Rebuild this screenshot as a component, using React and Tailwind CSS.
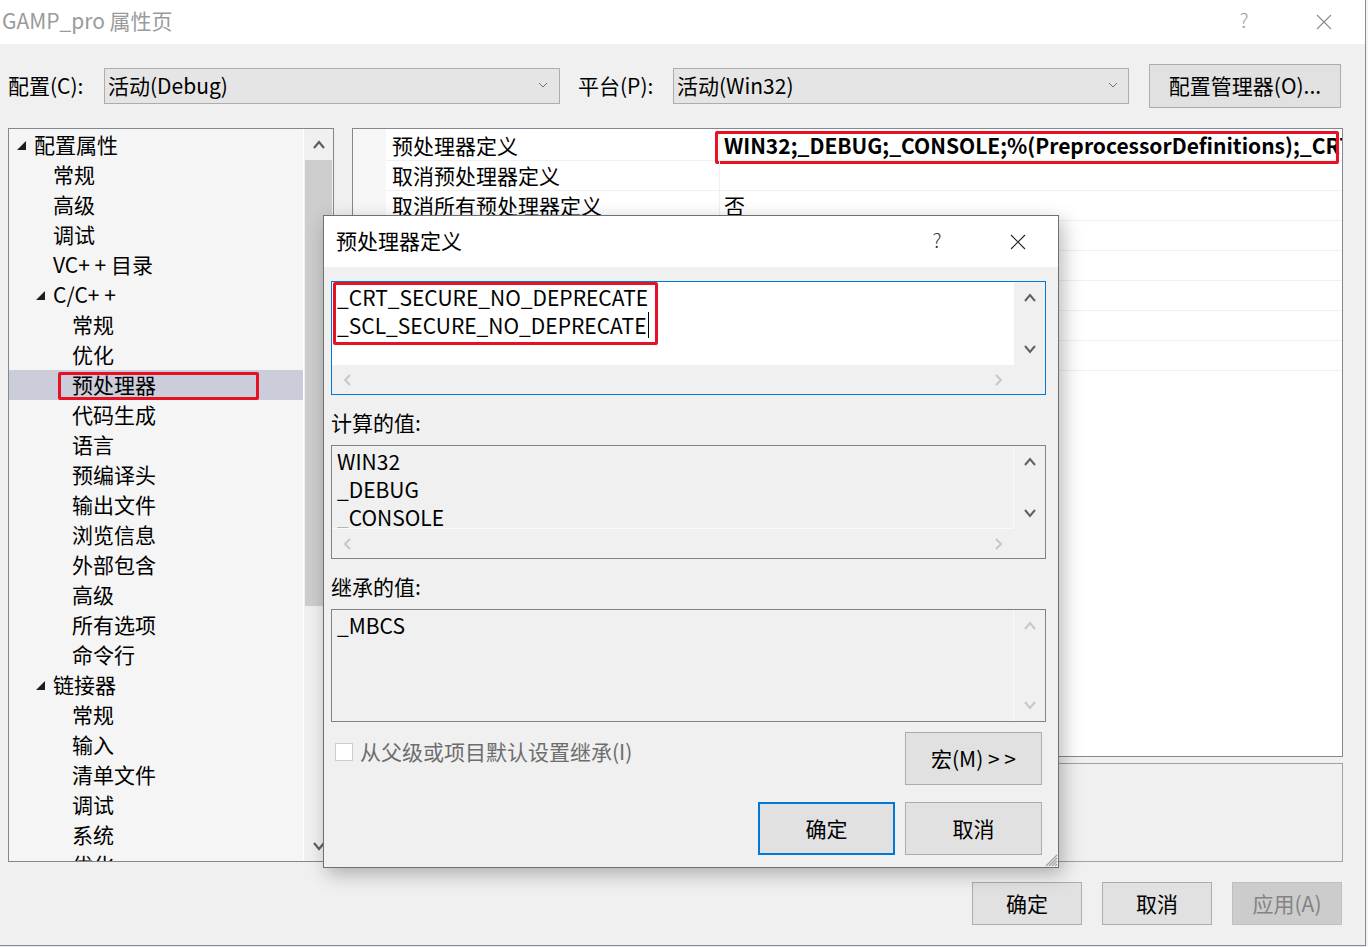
import React from 'react';

function Chev({ dir, color = '#5f5f5f', sw = 2, size = 12 }) {
  const pts = {
    up: '1,9 6,3 11,9',
    down: '1,3 6,9 11,3',
    left: '8,1 3,6 8,11',
    right: '4,1 9,6 4,11',
  }[dir];
  return (
    <svg width={size} height={size} viewBox="0 0 12 12" className="block">
      <polyline points={pts} fill="none" stroke={color} strokeWidth={sw} />
    </svg>
  );
}

function ComboChev() {
  return (
    <svg width="10" height="6" viewBox="0 0 10 6" className="block">
      <polyline points="1,1 5,5 9,1" fill="none" stroke="#707070" strokeWidth="1" />
    </svg>
  );
}

function XIcon({ color = '#000' }) {
  return (
    <svg width="16" height="16" viewBox="0 0 16 16" className="block">
      <path d="M1 1 L15 15 M15 1 L1 15" stroke={color} strokeWidth="1.1" fill="none" />
    </svg>
  );
}

function Triangle() {
  return (
    <svg width="9" height="9" viewBox="0 0 9 9" className="block">
      <polygon points="9,0 9,9 0,9" fill="#1e1e1e" />
    </svg>
  );
}

function Grip() {
  return (
    <svg width="14" height="14" viewBox="0 0 14 14" className="block">
      <path d="M13 2 L2 13 M13 5 L5 13 M13 8 L8 13 M13 11 L11 13" stroke="#a0a0a0" strokeWidth="1.2" fill="none" />
    </svg>
  );
}

const tree = [
  { l: 0, t: '配置属性', exp: true },
  { l: 1, t: '常规' },
  { l: 1, t: '高级' },
  { l: 1, t: '调试' },
  { l: 1, t: 'VC+ + 目录' },
  { l: 1, t: 'C/C+ +', exp: true },
  { l: 2, t: '常规' },
  { l: 2, t: '优化' },
  { l: 2, t: '预处理器', sel: true },
  { l: 2, t: '代码生成' },
  { l: 2, t: '语言' },
  { l: 2, t: '预编译头' },
  { l: 2, t: '输出文件' },
  { l: 2, t: '浏览信息' },
  { l: 2, t: '外部包含' },
  { l: 2, t: '高级' },
  { l: 2, t: '所有选项' },
  { l: 2, t: '命令行' },
  { l: 1, t: '链接器', exp: true },
  { l: 2, t: '常规' },
  { l: 2, t: '输入' },
  { l: 2, t: '清单文件' },
  { l: 2, t: '调试' },
  { l: 2, t: '系统' },
  { l: 2, t: '优化' },
];

const indent = ['pl-[6px]', 'pl-[25px]', 'pl-[44px]'];

const gridRows = [
  { n: '预处理器定义', v: 'WIN32;_DEBUG;_CONSOLE;%(PreprocessorDefinitions);_CRT_SECURE_NO_DEPRECATE', bold: true },
  { n: '取消预处理器定义', v: '' },
  { n: '取消所有预处理器定义', v: '否' },
  { n: '', v: '' },
  { n: '', v: '' },
  { n: '', v: '' },
  { n: '', v: '' },
  { n: '', v: '' },
];

export default function App() {
  return (
    <div className="w-[1368px] h-[947px] flex overflow-hidden bg-[#e4e6ec] font-['Noto_Sans_CJK_SC',sans-serif] text-[21px] text-black">
      <div className="relative w-[1366px] h-[946px] shrink-0 bg-[#f0f0f0] border-r border-b border-[#8a8a8a] flex flex-col">
        {/* title bar */}
        <div className="h-[44px] bg-white flex items-center pb-[5px] shrink-0">
          <span className="pl-[2px] text-[#9a9a9a] leading-[28px]">GAMP_pro 属性页</span>
          <div className="ml-auto flex items-center">
            <span className="w-[20px] text-center text-[#9a9a9a] text-[20px] leading-[24px] font-light">?</span>
            <div className="ml-[62px] mr-[33px] mt-[4px]">
              <XIcon color="#8a8a8a" />
            </div>
          </div>
        </div>

        {/* config row */}
        <div className="mt-[20px] h-[44px] flex items-center pl-[8px] shrink-0">
          <span className="w-[96px] leading-[28px] pb-[2px]">配置(C):</span>
          <div className="w-[456px] h-[36px] bg-[#e5e5e5] border border-[#adadad] flex items-center pl-[3px] pr-[11px] pb-[2px]">
            <span className="leading-[28px]">活动(Debug)</span>
            <div className="ml-auto"><ComboChev /></div>
          </div>
          <span className="ml-[18px] w-[95px] leading-[28px] pb-[2px]">平台(P):</span>
          <div className="w-[456px] h-[36px] bg-[#e5e5e5] border border-[#adadad] flex items-center pl-[3px] pr-[10px] pb-[2px]">
            <span className="leading-[28px]">活动(Win32)</span>
            <div className="ml-auto"><ComboChev /></div>
          </div>
          <div className="ml-[20px] w-[192px] h-[44px] bg-[#e1e1e1] border border-[#adadad] flex items-center justify-center pb-[2px]">
            <span className="leading-[28px]">配置管理器(O)...</span>
          </div>
        </div>

        {/* main content */}
        <div className="mt-[20px] h-[734px] flex shrink-0">
          {/* tree */}
          <div className="ml-[8px] w-[326px] h-[734px] border border-[#828790] bg-[#f5f5f5] flex overflow-hidden">
            <div className="w-[294px] pt-[1px] overflow-hidden">
              {tree.map((it, i) => (
                <div
                  key={i}
                  className={`relative h-[30px] flex items-center pb-[3px] ${indent[it.l]} ${it.sel ? 'bg-[#cbcdda]' : ''}`}
                >
                  <div className="w-[19px] h-[27px] flex items-center pt-[3px]">
                    {it.exp && <div className="ml-[2px]"><Triangle /></div>}
                  </div>
                  <span className="leading-[28px] whitespace-nowrap">{it.t}</span>
                  {it.sel && (
                    <div className="absolute left-[49px] top-[2px] w-[201px] h-[28px] border-[3px] border-[#e81123] rounded-[2px]" />
                  )}
                </div>
              ))}
            </div>
            <div className="w-[30px] flex flex-col bg-[#f0f0f0] border-l border-white">
              <div className="h-[31px] flex items-center justify-center">
                <Chev dir="up" color="#606060" sw={2.2} />
              </div>
              <div className="h-[446px] bg-[#cdcdcd] mx-[1px]" />
              <div className="mt-auto h-[31px] flex items-center justify-center">
                <Chev dir="down" color="#606060" sw={2.2} />
              </div>
            </div>
          </div>

          {/* right column */}
          <div className="ml-[18px] w-[991px] flex flex-col">
            <div className="h-[629px] border border-[#828790] bg-white flex overflow-hidden">
              <div className="w-[33px] bg-[#f7f7f7]" />
              <div className="flex-1 pt-[2px] overflow-hidden">
                {gridRows.map((r, i) => (
                  <div key={i} className="relative h-[30px] flex border-b border-[#f0f0f0]">
                    <div className="w-[334px] pl-[6px] pb-[2px] flex items-center border-r border-[#f0f0f0] whitespace-nowrap">
                      <span className="leading-[28px]">{r.n}</span>
                    </div>
                    <div className="flex-1 pl-[4px] pb-[2px] flex items-center overflow-hidden whitespace-nowrap">
                      <span className={`leading-[28px] ${r.bold ? 'font-bold' : ''}`}>{r.v}</span>
                    </div>
                    {i === 0 && (
                      <div className="absolute left-[329px] top-[0px] w-[624px] h-[33px] border-[3px] border-[#e81123] rounded-[2px]" />
                    )}
                  </div>
                ))}
              </div>
            </div>
            <div className="mt-[6px] h-[99px] border border-[#a0a0a0] bg-[#f0f0f0]" />
          </div>
        </div>

        {/* bottom buttons */}
        <div className="mt-[20px] flex justify-end gap-[20px] pr-[23px] shrink-0">
          <div className="w-[110px] h-[43px] bg-[#e1e1e1] border border-[#adadad] flex items-center justify-center pb-[2px]">
            <span className="leading-[28px]">确定</span>
          </div>
          <div className="w-[110px] h-[43px] bg-[#e1e1e1] border border-[#adadad] flex items-center justify-center pb-[2px]">
            <span className="leading-[28px]">取消</span>
          </div>
          <div className="w-[110px] h-[43px] bg-[#cccccc] border border-[#bfbfbf] flex items-center justify-center pb-[2px]">
            <span className="leading-[28px] text-[#838383]">应用(A)</span>
          </div>
        </div>

        {/* modal dialog */}
        <div className="absolute left-[323px] top-[215px] w-[736px] h-[653px] bg-[#f0f0f0] border border-[#707070] shadow-[4px_6px_18px_rgba(0,0,0,0.28)] flex flex-col">
          <div className="h-[51px] bg-white flex items-center pb-[3px] shrink-0">
            <span className="pl-[12px] leading-[28px]">预处理器定义</span>
            <div className="ml-auto flex items-center">
              <span className="w-[20px] text-center text-[20px] leading-[24px] font-light text-[#333]">?</span>
              <div className="ml-[63px] mr-[32px] mt-[3px]">
                <XIcon color="#222" />
              </div>
            </div>
          </div>

          <div className="pl-[7px] flex flex-col">
            {/* edit box */}
            <div className="mt-[14px] w-[715px] h-[114px] border border-[#0078d7] flex flex-col">
              <div className="h-[83px] flex">
                <div className="relative flex-1 bg-white pl-[5px] pt-[1px] overflow-hidden">
                  <div className="leading-[28px] whitespace-nowrap">_CRT_SECURE_NO_DEPRECATE</div>
                  <div className="leading-[28px] whitespace-nowrap flex items-center">
                    <span>_SCL_SECURE_NO_DEPRECATE</span>
                    <span className="inline-block w-[1px] h-[26px] bg-black ml-[1px]" />
                  </div>
                  <div className="absolute left-[1px] top-0 w-[325px] h-[63px] border-[3px] border-[#e81123] rounded-[2px]" />
                </div>
                <div className="w-[31px] bg-[#f0f0f0] flex flex-col items-center justify-between py-[10px]">
                  <Chev dir="up" color="#606060" />
                  <Chev dir="down" color="#606060" />
                </div>
              </div>
              <div className="h-[29px] flex bg-[#f0f0f0]">
                <div className="flex-1 flex items-center justify-between pl-[10px] pr-[10px]">
                  <Chev dir="left" color="#c5c5c5" sw={1.8} />
                  <Chev dir="right" color="#c5c5c5" sw={1.8} />
                </div>
                <div className="w-[31px]" />
              </div>
            </div>

            <div className="h-[50px] flex items-end pb-[9px]">
              <span className="leading-[28px]">计算的值:</span>
            </div>

            {/* computed */}
            <div className="w-[715px] h-[114px] border border-[#828282] flex flex-col">
              <div className="h-[83px] flex">
                <div className="flex-1 pl-[5px] pt-[1px] overflow-hidden border-r border-b border-[#fafafa]">
                  <div className="leading-[28px]">WIN32</div>
                  <div className="leading-[28px]">_DEBUG</div>
                  <div className="leading-[28px]">_CONSOLE</div>
                </div>
                <div className="w-[31px] flex flex-col items-center justify-between py-[10px]">
                  <Chev dir="up" color="#606060" />
                  <Chev dir="down" color="#606060" />
                </div>
              </div>
              <div className="h-[29px] flex">
                <div className="flex-1 flex items-center justify-between pl-[10px] pr-[10px]">
                  <Chev dir="left" color="#c5c5c5" sw={1.8} />
                  <Chev dir="right" color="#c5c5c5" sw={1.8} />
                </div>
                <div className="w-[31px]" />
              </div>
            </div>

            <div className="h-[50px] flex items-end pb-[9px]">
              <span className="leading-[28px]">继承的值:</span>
            </div>

            {/* inherited */}
            <div className="w-[715px] h-[113px] border border-[#828282] flex">
              <div className="flex-1 pl-[5px] pt-[1px] overflow-hidden border-r border-[#fafafa]">
                <div className="leading-[28px]">_MBCS</div>
              </div>
              <div className="w-[31px] flex flex-col items-center justify-between py-[10px]">
                <Chev dir="up" color="#c8c8c8" />
                <Chev dir="down" color="#c8c8c8" />
              </div>
            </div>

            {/* checkbox + macro */}
            <div className="mt-[10px] w-[715px] h-[53px] flex pr-[4px]">
              <div className="pl-[4px] pt-[11px] flex items-start">
                <div className="w-[18px] h-[18px] bg-white border border-[#cccccc]" />
                <span className="ml-[7px] -mt-[6px] leading-[28px] text-[#6d6d6d]">从父级或项目默认设置继承(I)</span>
              </div>
              <div className="ml-auto w-[137px] h-[53px] bg-[#e1e1e1] border border-[#adadad] flex items-center justify-center pb-[2px]">
                <span className="leading-[28px]">宏(M) &gt; &gt;</span>
              </div>
            </div>

            {/* ok cancel */}
            <div className="mt-[17px] w-[715px] h-[53px] flex justify-end gap-[10px] pr-[4px]">
              <div className="w-[137px] h-[53px] bg-[#e1e1e1] border-2 border-[#0078d7] flex items-center justify-center pb-[2px]">
                <span className="leading-[28px]">确定</span>
              </div>
              <div className="w-[137px] h-[53px] bg-[#e1e1e1] border border-[#adadad] flex items-center justify-center pb-[2px]">
                <span className="leading-[28px]">取消</span>
              </div>
            </div>
          </div>

          <div className="absolute right-0 bottom-0">
            <Grip />
          </div>
        </div>
      </div>
      <div className="flex-1 bg-[#f4f4f4]" />
    </div>
  );
}
